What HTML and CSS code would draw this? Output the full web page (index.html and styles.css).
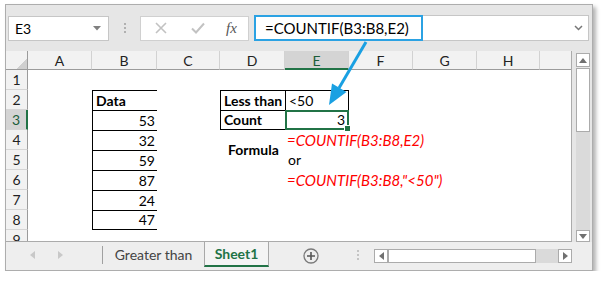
FILE: index.html
```html
<!DOCTYPE html>
<html lang="en">
<head>
<meta charset="UTF-8">
<title>COUNTIF less than</title>
<link rel="stylesheet" href="styles.css">
</head>
<body>
<div class="window">
    <div class="formula-bar">
        <div class="name-box">
            <span>E3</span>
            <svg width="8" height="5" viewBox="0 0 8 5"><path d="M0 0h8L4 4.5z" fill="#808080"/></svg>
        </div>
        <div class="grip"><i></i><i></i><i></i></div>
        <div class="fx-buttons">
            <svg width="14" height="14" viewBox="0 0 14 14"><path d="M2 2l10 10M12 2L2 12" stroke="#c2c2c2" stroke-width="1.6"/></svg>
            <svg width="16" height="14" viewBox="0 0 16 14"><path d="M2 7.5l4 4 8-9" stroke="#c2c2c2" stroke-width="2" fill="none"/></svg>
            <span class="fx">fx</span>
        </div>
        <div class="formula-input">
            <div class="formula-text">=COUNTIF(B3:B8,E2)</div>
            <div class="formula-rest">
                <svg width="9" height="6" viewBox="0 0 9 6"><path d="M1 1l3.5 3.5L8 1" stroke="#777" stroke-width="1.5" fill="none"/></svg>
            </div>
        </div>
    </div>

    <div class="sheet-area">
        <div class="grid">
            <div class="corner"></div>
            <div class="ch">A</div><div class="ch">B</div><div class="ch">C</div><div class="ch">D</div>
            <div class="ch active">E</div><div class="ch">F</div><div class="ch">G</div><div class="ch">H</div><div class="ch"></div>

            <div class="rh">1</div>
            <div class="cell"></div><div class="cell"></div><div class="cell"></div><div class="cell"></div>
            <div class="cell"></div><div class="cell"></div><div class="cell"></div><div class="cell"></div><div class="cell"></div>

            <div class="rh">2</div>
            <div class="cell"></div><div class="cell box bold">Data</div><div class="cell"></div>
            <div class="cell box bold">Less than</div><div class="cell box box-end">&lt;50</div>
            <div class="cell"></div><div class="cell"></div><div class="cell"></div><div class="cell"></div>

            <div class="rh active">3</div>
            <div class="cell"></div><div class="cell box num">53</div><div class="cell"></div>
            <div class="cell box box-last bold">Count</div><div class="cell num selected">3</div>
            <div class="cell"></div><div class="cell"></div><div class="cell"></div><div class="cell"></div>

            <div class="rh">4</div>
            <div class="cell"></div><div class="cell box num">32</div><div class="cell"></div>
            <div class="cell merged bold">Formula</div><div class="cell formula">=COUNTIF(B3:B8,E2)</div>
            <div class="cell"></div><div class="cell"></div><div class="cell"></div><div class="cell"></div>

            <div class="rh">5</div>
            <div class="cell"></div><div class="cell box num">59</div><div class="cell"></div>
            <div class="cell">or</div>
            <div class="cell"></div><div class="cell"></div><div class="cell"></div><div class="cell"></div>

            <div class="rh">6</div>
            <div class="cell"></div><div class="cell box num">87</div><div class="cell"></div>
            <div class="cell"></div><div class="cell formula">=COUNTIF(B3:B8,"&lt;50")</div>
            <div class="cell"></div><div class="cell"></div><div class="cell"></div><div class="cell"></div>

            <div class="rh">7</div>
            <div class="cell"></div><div class="cell box num">24</div><div class="cell"></div>
            <div class="cell"></div><div class="cell"></div>
            <div class="cell"></div><div class="cell"></div><div class="cell"></div><div class="cell"></div>

            <div class="rh">8</div>
            <div class="cell"></div><div class="cell box box-last num">47</div><div class="cell"></div>
            <div class="cell"></div><div class="cell"></div>
            <div class="cell"></div><div class="cell"></div><div class="cell"></div><div class="cell"></div>

            <div class="rh">9</div>
        </div>

        <div class="vscroll">
            <div class="sb-btn"><svg width="8" height="5" viewBox="0 0 8 5"><path d="M0 5h8L4 0z" fill="#707070"/></svg></div>
            <div class="sb-thumb"></div>
            <div class="sb-track"></div>
            <div class="sb-btn"><svg width="8" height="5" viewBox="0 0 8 5"><path d="M0 0h8L4 5z" fill="#707070"/></svg></div>
        </div>
    </div>

    <div class="tab-bar">
        <div class="tab-nav">
            <svg width="5" height="8" viewBox="0 0 5 8"><path d="M5 0v8L0 4z" fill="#c8c8c8"/></svg>
            <svg width="5" height="8" viewBox="0 0 5 8"><path d="M0 0v8l5-4z" fill="#c8c8c8"/></svg>
        </div>
        <div class="tab other">Greater than</div>
        <div class="tab current">Sheet1</div>
        <div class="add-sheet">
            <svg width="16" height="16" viewBox="0 0 16 16"><circle cx="8" cy="8" r="7" stroke="#7a7a7a" stroke-width="1.3" fill="none"/><path d="M8 4v8M4 8h8" stroke="#555" stroke-width="1.6"/></svg>
        </div>
        <div class="grip tab-grip"><i></i><i></i><i></i></div>
        <div class="hscroll">
            <div class="sb-btn"><svg width="5" height="8" viewBox="0 0 5 8"><path d="M5 0v8L0 4z" fill="#707070"/></svg></div>
            <div class="sb-thumb"></div>
            <div class="sb-track"></div>
            <div class="sb-btn"><svg width="5" height="8" viewBox="0 0 5 8"><path d="M0 0v8l5-4z" fill="#707070"/></svg></div>
        </div>
    </div>
</div>

<!-- callout arrow from the formula bar to E2 -->
<svg class="callout" width="602" height="283" viewBox="0 0 602 283">
    <path d="M366 42L339 88" stroke="#1aa0e2" stroke-width="3"/>
    <polygon points="329,105 332,83.5 346.5,92" fill="#1aa0e2"/>
</svg>
</body>
</html>
```

FILE: styles.css
```css
body {
    margin: 0;
    background: #fff;
    font-family: Lato, "Noto Sans", sans-serif;
    font-size: 14px;
    color: #000;
}
.window {
    margin: 4px 0 0 5px;
    width: 588px;
    height: 267px;
    box-sizing: border-box;
    border: 1px solid #adadad;
    background: #e6e6e6;
    box-shadow: 3px 3px 4px rgba(0, 0, 0, 0.3);
    display: flex;
    flex-direction: column;
}

/* formula bar */
.formula-bar {
    display: flex;
    align-items: center;
    height: 26px;
    margin: 10px 3px 0 2px;
}
.name-box {
    width: 101px;
    height: 25px;
    box-sizing: border-box;
    background: #fff;
    border: 1px solid #c6c6c6;
    display: flex;
    align-items: center;
    justify-content: space-between;
    padding: 0 7px 0 6px;
}
.grip {
    width: 31px;
    display: flex;
    flex-direction: column;
    align-items: center;
    gap: 2px;
}
.grip i {
    width: 2px;
    height: 2px;
    background: #b0b0b0;
}
.fx-buttons {
    width: 109px;
    height: 25px;
    box-sizing: border-box;
    background: #fff;
    border: 1px solid #d0d0d0;
    display: flex;
    align-items: center;
    padding-left: 13px;
    gap: 22px;
}
.fx {
    font-family: "Liberation Serif", serif;
    font-style: italic;
    font-size: 15px;
    color: #555;
    margin-left: -2px;
}
.formula-input {
    flex: 1;
    display: flex;
    height: 26px;
    margin-left: 5px;
}
.formula-text {
    width: 169px;
    box-sizing: border-box;
    border: 2px solid #2ba2e3;
    background: #fff;
    padding-left: 9px;
    line-height: 22px;
    font-size: 15px;
}
.formula-rest {
    flex: 1;
    background: #fff;
    border: 1px solid #c6c6c6;
    border-left: none;
    display: flex;
    align-items: center;
    justify-content: flex-end;
    padding-right: 5px;
}

/* sheet */
.sheet-area {
    display: flex;
    margin-top: 10px;
    height: 191px;
}
.grid {
    width: 566px;
    height: 191px;
    box-sizing: border-box;
    display: grid;
    grid-template-columns: 22px 64px 65px 63px 65px 64px 64px 64px 63px 32px;
    grid-template-rows: 19px repeat(8, 20px) 12px;
    background: #fff;
    border-right: 1px solid #ababab;
    border-bottom: 1px solid #ababab;
    overflow: hidden;
}
.corner {
    background: #f2f2f2 linear-gradient(135deg, transparent 60%, #cfcfcf 60%) no-repeat 8px 5px / 13px 13px;
    border-right: 1px solid #9b9b9b;
    border-bottom: 1px solid #9b9b9b;
}
.ch {
    background: #f2f2f2;
    border-right: 1px solid #d2d2d2;
    border-bottom: 1px solid #9b9b9b;
    text-align: center;
    line-height: 19px;
    color: #222;
}
.ch.active {
    background: #d4d4d4;
    border-bottom: 2px solid #217346;
    color: #1b5e3a;
}
.rh {
    background: #f2f2f2;
    border-right: 1px solid #9b9b9b;
    border-bottom: 1px solid #d6d6d6;
    text-align: center;
    line-height: 20px;
    color: #222;
}
.rh.active {
    background: #d4d4d4;
    border-right: 2px solid #217346;
    color: #1b5e3a;
}
.cell {
    line-height: 20px;
    padding: 0 3px;
    white-space: nowrap;
}
.box {
    border-left: 1px solid #000;
    border-top: 1px solid #000;
    line-height: 20px;
}
.box-end {
    border-right: 1px solid #000;
}
.box-last {
    border-bottom: 1px solid #000;
    line-height: 18px;
}
.num {
    text-align: right;
    padding-right: 2px;
}
.bold {
    font-weight: bold;
}
.merged {
    grid-row: span 2;
    align-self: center;
    padding-left: 8px;
}
.formula {
    color: #ff0000;
    font-style: italic;
    font-size: 15px;
    padding-left: 2px;
}
.selected {
    position: relative;
    border: 2px solid #217346;
    line-height: 16px;
    padding-right: 2px;
}
.selected::after {
    content: "";
    position: absolute;
    right: -4px;
    bottom: -4px;
    width: 5px;
    height: 5px;
    background: #217346;
    border: 1px solid #fff;
}

/* scroll bars */
.vscroll {
    width: 14px;
    margin-left: 4px;
    padding-top: 2px;
    display: flex;
    flex-direction: column;
}
.sb-btn {
    width: 14px;
    height: 14px;
    box-sizing: border-box;
    border: 1px solid #ababab;
    background: #fff;
    display: flex;
    align-items: center;
    justify-content: center;
}
.sb-thumb {
    background: #fff;
    border: 1px solid #ababab;
}
.sb-track {
    flex: 1;
    background: #dadada;
}
.vscroll .sb-thumb {
    height: 62px;
    margin-top: 1px;
}
.vscroll .sb-btn:last-child {
    height: 12px;
}
.hscroll {
    display: flex;
    width: 198px;
    height: 14px;
    margin: 7px 0 0 10px;
}
.hscroll .sb-thumb {
    width: 148px;
    box-sizing: border-box;
}

/* sheet tabs */
.tab-bar {
    flex: 1;
    display: flex;
    align-items: flex-start;
    background: #eeeeee;
}
.tab-nav {
    width: 97px;
    flex-shrink: 0;
    height: 18px;
    margin-top: 4px;
    box-sizing: border-box;
    border-right: 1px solid #a0a0a0;
    display: flex;
    align-items: center;
    padding-left: 24px;
    gap: 23px;
}
.tab {
    flex-shrink: 0;
    height: 25px;
    box-sizing: border-box;
    line-height: 25px;
    text-align: center;
    color: #444;
}
.tab.other {
    width: 101px;
}
.tab.current {
    width: 65px;
    border-left: 1px solid #a8a8a8;
    border-right: 1px solid #a8a8a8;
    border-bottom: 2px solid #217346;
    background: #f4f4f4;
    color: #217346;
    font-weight: bold;
    line-height: 23px;
}
.add-sheet {
    margin: 6px 0 0 34px;
    height: 16px;
}
.tab-grip {
    width: 12px;
    margin: 8px 0 0 33px;
}
.tab-grip i {
    background: #c4c4c4;
}

.callout {
    position: absolute;
    left: 0;
    top: 0;
    pointer-events: none;
}
```
